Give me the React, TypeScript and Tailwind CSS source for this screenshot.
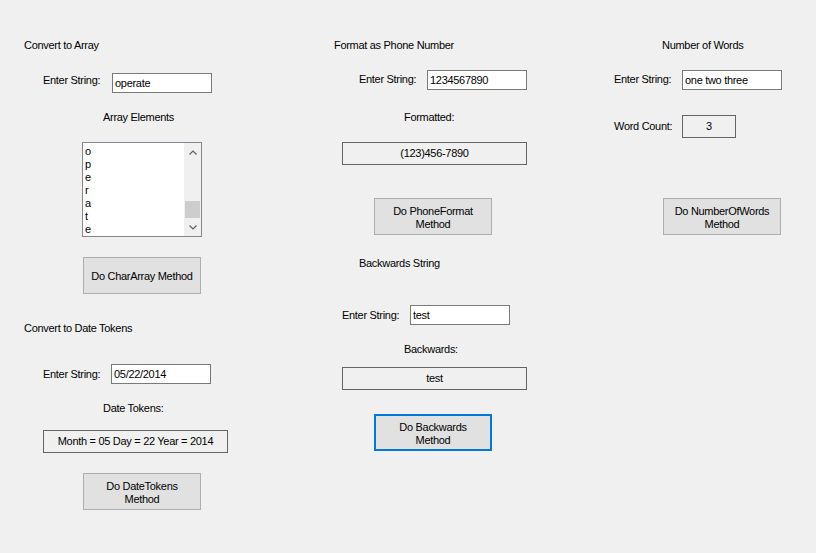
import React from "react";

const Label = ({ className = "", children }: { className?: string; children: React.ReactNode }) => (
  <div className={`block h-[13px] whitespace-nowrap text-[11px] leading-[13px] ${className}`}>{children}</div>
);

const TextBox = ({ value }: { value: string }) => (
  <div className="h-[20px] w-[100px] overflow-hidden whitespace-nowrap border border-[#7a7a7a] bg-white px-[2px] text-[11px] leading-[18px]">
    {value}
  </div>
);

const BoxLabel = ({ className = "", children }: { className?: string; children: React.ReactNode }) => (
  <div className={`flex h-[23px] items-center justify-center whitespace-nowrap border border-[#646464] text-[11px] leading-[13px] ${className}`}>
    {children}
  </div>
);

const WinButton = ({
  className = "",
  focused = false,
  children,
}: {
  className?: string;
  focused?: boolean;
  children: React.ReactNode;
}) => (
  <div
    className={`flex h-[37px] w-[118px] flex-col items-center justify-center bg-[#e1e1e1] pt-[2px] text-center text-[11px] leading-[13px] ${
      focused ? "border-2 border-[#0078d7]" : "border border-[#adadad]"
    } ${className}`}
  >
    {children}
  </div>
);

const Chevron = ({ up }: { up?: boolean }) => (
  <svg width="8" height="5" viewBox="0 0 8 5" fill="none" stroke="#606060" strokeWidth="1.2">
    <path d={up ? "M0.5 4.5 L4 1 L7.5 4.5" : "M0.5 0.5 L4 4 L7.5 0.5"} />
  </svg>
);

const ListBox = ({ className = "", items }: { className?: string; items: string[] }) => (
  <div className={`flex h-[95px] w-[120px] border border-[#828790] bg-white ${className}`}>
    <div className="flex-1 overflow-hidden pl-[2px] pt-[2px]">
      {items.map((c, i) => (
        <div key={i} className="h-[13px] text-[11px] leading-[13px]">
          {c}
        </div>
      ))}
    </div>
    <div className="flex w-[17px] flex-col bg-[#f0f0f0]">
      <div className="flex h-[17px] items-center justify-center pt-[2px]">
        <Chevron up />
      </div>
      <div className="flex flex-1 flex-col justify-end pb-[1px]">
        <div className="mx-[1px] h-[17px] bg-[#cdcdcd]" />
      </div>
      <div className="flex h-[17px] items-center justify-center">
        <Chevron />
      </div>
    </div>
  </div>
);

export default function App() {
  return (
    <div className="flex h-[553px] w-[816px] bg-[#f0f0f0] font-['Liberation_Sans',Arial,sans-serif] tracking-[-0.3px] text-black">
      {/* Convert to Array / Date Tokens */}
      <div className="flex w-[320px] flex-col items-start">
        <Label className="ml-[24px] mt-[39px]">Convert to Array</Label>
        <div className="ml-[43px] mt-[21px] flex items-start">
          <Label className="mt-[1px] w-[69px]">Enter String:</Label>
          <TextBox value="operate" />
        </div>
        <Label className="ml-[103px] mt-[18px]">Array Elements</Label>
        <ListBox className="ml-[82px] mt-[18px]" items={["o", "p", "e", "r", "a", "t", "e"]} />
        <WinButton className="ml-[83px] mt-[20px]">Do CharArray Method</WinButton>

        <Label className="ml-[24px] mt-[28px]">Convert to Date Tokens</Label>
        <div className="ml-[43px] mt-[29px] flex items-start">
          <Label className="mt-[4px] w-[68px]">Enter String:</Label>
          <TextBox value="05/22/2014" />
        </div>
        <Label className="ml-[103px] mt-[18px]">Date Tokens:</Label>
        <BoxLabel className="ml-[43px] mt-[15px] w-[185px]">Month = 05 Day = 22 Year = 2014</BoxLabel>
        <WinButton className="ml-[83px] mt-[20px]">
          <span>Do DateTokens</span>
          <span>Method</span>
        </WinButton>
      </div>

      {/* Phone number / Backwards */}
      <div className="flex w-[270px] flex-col items-start">
        <Label className="ml-[14px] mt-[39px]">Format as Phone Number</Label>
        <div className="ml-[39px] mt-[18px] flex items-start">
          <Label className="mt-[3px] w-[68px]">Enter String:</Label>
          <TextBox value="1234567890" />
        </div>
        <Label className="ml-[84px] mt-[21px]">Formatted:</Label>
        <BoxLabel className="ml-[22px] mt-[18px] w-[185px]">(123)456-7890</BoxLabel>
        <WinButton className="ml-[54px] mt-[33px]">
          <span>Do PhoneFormat</span>
          <span>Method</span>
        </WinButton>

        <Label className="ml-[39px] mt-[22px]">Backwards String</Label>
        <div className="ml-[22px] mt-[35px] flex items-start">
          <Label className="mt-[4px] w-[68px]">Enter String:</Label>
          <TextBox value="test" />
        </div>
        <Label className="ml-[84px] mt-[18px]">Backwards:</Label>
        <BoxLabel className="ml-[22px] mt-[11px] w-[185px]">test</BoxLabel>
        <WinButton focused className="ml-[54px] mt-[24px]">
          <span>Do Backwards</span>
          <span>Method</span>
        </WinButton>
      </div>

      {/* Number of words */}
      <div className="flex flex-1 flex-col items-start">
        <Label className="ml-[72px] mt-[39px]">Number of Words</Label>
        <div className="ml-[24px] mt-[18px] flex items-start">
          <Label className="mt-[3px] w-[68px]">Enter String:</Label>
          <TextBox value="one two three" />
        </div>
        <div className="ml-[24px] mt-[25px] flex items-start">
          <Label className="mt-[5px] w-[68px]">Word Count:</Label>
          <BoxLabel className="w-[54px]">3</BoxLabel>
        </div>
        <WinButton className="ml-[73px] mt-[60px]">
          <span>Do NumberOfWords</span>
          <span>Method</span>
        </WinButton>
      </div>
    </div>
  );
}
